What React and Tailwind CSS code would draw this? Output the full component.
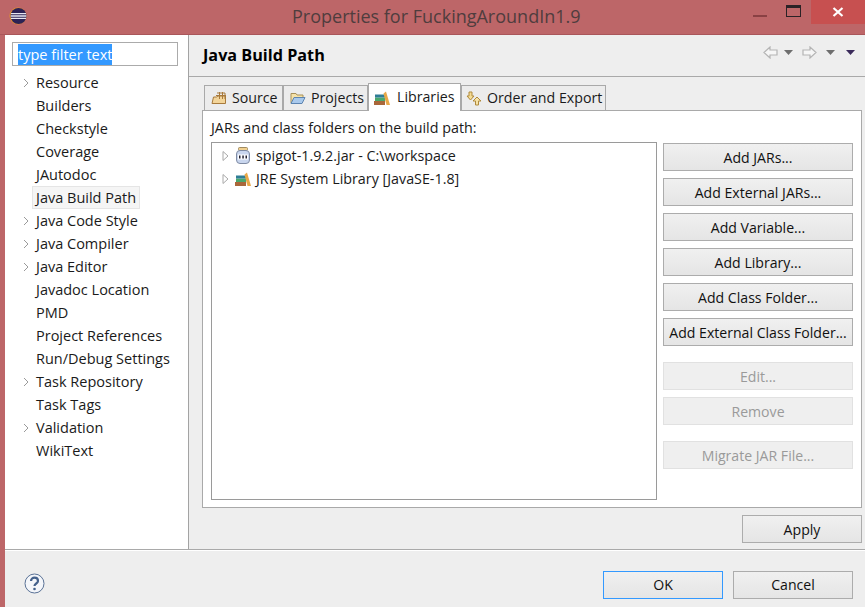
const font = { fontFamily: '"Open Sans", "Noto Sans", sans-serif' };

const treeItems = [
  ["Resource", true], ["Builders"], ["Checkstyle"], ["Coverage"], ["JAutodoc"],
  ["Java Build Path", false, true], ["Java Code Style", true], ["Java Compiler", true],
  ["Java Editor", true], ["Javadoc Location"], ["PMD"], ["Project References"],
  ["Run/Debug Settings"], ["Task Repository", true], ["Task Tags"], ["Validation", true], ["WikiText"],
];

function Chevron({ color = "#9a9a9a" }) {
  return (
    <svg width="6" height="10" viewBox="0 0 6 10" className="shrink-0">
      <path d="M1 1l4 4-4 4" fill="none" stroke={color} strokeWidth="1" />
    </svg>
  );
}

function Tri() {
  return (
    <svg width="7" height="10" viewBox="0 0 7 10" className="shrink-0">
      <path d="M1 .5l5 4.500-5 4.500z" fill="#fff" stroke="#a8a8a8" strokeWidth="1" />
    </svg>
  );
}

function Eclipse() {
  return (
    <svg width="18" height="18" viewBox="0 0 18 18">
      <circle cx="9" cy="9" r="8.500" fill="#e8942a" />
      <circle cx="9.500" cy="9" r="8" fill="#2c2255" />
      <path d="M2 6.600h15M1.700 9h15.600M2 11.400h15" stroke="#e6e6f0" strokeWidth="1.300" />
    </svg>
  );
}

function Books({ className = "" }) {
  return (
    <svg width="16" height="14" viewBox="0 0 16 14" className={className}>
      <rect x="0" y="10" width="11" height="4" fill="#a9673a" />
      <rect x="1" y="6.500" width="10" height="3.500" fill="#4aa86c" />
      <rect x="1" y="3.500" width="10" height="3" fill="#2f7d96" />
      <path d="M9.500 2.500L12 .5l4 13.500h-3.500z" fill="#e8a848" />
    </svg>
  );
}

function Jar() {
  return (
    <svg width="14" height="17" viewBox="0 0 14 17">
      <rect x="2.500" y="0.500" width="9" height="3" rx="1" fill="#f0d090" stroke="#a08a60" />
      <rect x="0.500" y="3.500" width="13" height="13" rx="3.500" fill="#c9d6ee" stroke="#7f8ba3" />
      <path d="M2 7.500h10v5H2z" fill="#fff" />
      <path d="M3 8.500h1.500v3H3zM6.300 8.500h1.500v3H6.300zM9.500 8.500H11v3H9.500z" fill="#223" />
    </svg>
  );
}

function SourceIcon() {
  return (
    <svg width="16" height="14" viewBox="0 0 16 14">
      <path d="M1 12.500L2.500 6h3l1.500-1h7.500v7.500z" fill="#f3d59a" stroke="#a87a3c" />
      <path d="M6 2h8v6M8.500 1v7M11.500 1v7M5 4.500h10" fill="none" stroke="#a87a3c" />
    </svg>
  );
}

function FolderIcon() {
  return (
    <svg width="16" height="14" viewBox="0 0 16 14">
      <path d="M1 12V2.500h5l1 1.500h6v3" fill="#f5e2a8" stroke="#a89058" />
      <path d="M1 12.500l3-6h11l-3 6z" fill="#a9c9ec" stroke="#5d84b0" />
    </svg>
  );
}

function OrderIcon() {
  return (
    <svg width="16" height="15" viewBox="0 0 16 15">
      <path d="M3 1h3v4h2l-3.500 4L1 5h2z" fill="#f4dc94" stroke="#b08a3c" />
      <path d="M12.500 14H9.500v-4H7l4-4 4 4h-2.500z" fill="#f6e3a8" stroke="#b08a3c" />
    </svg>
  );
}

function Arrow({ flip }) {
  return (
    <svg width="15" height="13" viewBox="0 0 15 13" className={flip ? "-scale-x-100" : ""}>
      <path d="M1 6.500L7 1v3h7v5H7v3z" fill="#f6f6f6" stroke="#b4b4b4" strokeWidth="1.200" />
    </svg>
  );
}

function Drop({ color = "#6e6e6e" }) {
  return (
    <svg width="9" height="5" viewBox="0 0 9 5">
      <path d="M0 0h9L4.500 5z" fill={color} />
    </svg>
  );
}

function Btn({ children, disabled, primary, flat, className = "" }) {
  const look = disabled
    ? "border-[#e1e1e1] bg-[#efefef] text-[#9a9a9a]"
    : primary
      ? "border-[#3399ff] bg-gradient-to-b from-[#f0f0f0] to-[#e5e5e5] text-[#111]"
      : "border-[#acacac] bg-gradient-to-b from-[#f0f0f0] to-[#e5e5e5] text-[#111]";
  return (
    <div className={`flex h-7 items-center justify-center border text-[14.100px] leading-none whitespace-nowrap ${flat ? "" : "pt-[2px]"} ${look} ${className}`}>
      {children}
    </div>
  );
}

function Tab({ icon, label, active, className = "" }) {
  return active ? (
    <div className={`z-10 -mb-px flex h-[28px] items-center gap-[7px] self-end border border-b-0 border-[#a9a9a9] bg-white text-[14.200px] whitespace-nowrap ${className}`}>
      {icon}
      <span className="-mt-[2px]">{label}</span>
    </div>
  ) : (
    <div className={`flex h-[25px] items-center gap-[5px] self-end border border-b-0 border-[#a9a9a9] bg-[#ececec] text-[14.200px] whitespace-nowrap ${className}`}>
      {icon}
      <span>{label}</span>
    </div>
  );
}

export default function App() {
  return (
    <div style={font} className="flex h-[607px] w-[865px] flex-col overflow-hidden bg-[#bd6668] text-[#1a1a1a]">
      {/* Title bar */}
      <div className="flex h-[35px] shrink-0 border-b border-[#a9565a]">
        <div className="flex w-[292px] items-start pl-[9px] pt-[7px]">
          <Eclipse />
        </div>
        <div className="w-[301px] pt-[5px] text-[18px] leading-[23px] whitespace-nowrap text-[#4f3d3e]">
          Properties for FuckingAroundIn1.9
        </div>
        <div className="flex flex-1 items-start">
          <div className="ml-[160px] mt-[15px] h-[2px] w-[14px] bg-[#8a4144]" />
          <div className="ml-[19px] mt-[5px] h-[12px] w-[15px] border border-t-[3px] border-[#2b2226]" />
          <div className="ml-[10px] flex h-6 w-[54px] items-center justify-center bg-[#c75050]">
            <svg width="12" height="10" viewBox="0 0 12 10">
              <path d="M1.500 1l9 8M10.500 1l-9 8" stroke="#fff" strokeWidth="2.200" />
            </svg>
          </div>
        </div>
      </div>

      {/* Body */}
      <div className="ml-[5px] flex min-h-0 flex-1 flex-col bg-[#eeeeee]">
        <div className="flex h-[515px] border-b border-[#a9a9a9]">
          {/* Left nav */}
          <div className="w-[184px] shrink-0 border-r border-[#a3a3a3] bg-white pt-[7px]">
            <div className="mx-[7px] flex h-[24px] w-[166px] items-center border border-[#ababab] px-[5px]">
              <span className="bg-[#3399ff] pt-px text-[14.500px] leading-[20px] whitespace-nowrap text-white">type filter text</span>
            </div>
            <div className="mt-[5px] flex flex-col">
              {treeItems.map(([name, chev, sel]) => (
                <div key={name} className="flex h-[23px] items-center">
                  <span className="flex w-[27px] shrink-0 justify-end pr-[3px]">{chev ? <Chevron /> : null}</span>
                  <span className={`flex h-[23px] items-center border px-[3px] text-[14.500px] whitespace-nowrap ${sel ? "border-[#e5e5e5] bg-[#f5f5f5]" : "border-transparent"}`}>{name}</span>
                </div>
              ))}
            </div>
          </div>

          {/* Right page */}
          <div className="flex min-w-0 flex-1 flex-col">
            <div className="flex h-[42px] shrink-0 items-center justify-between border-b border-[#a9a9a9] pl-[14px] pr-[10px]">
              <span className="text-[16.200px] font-bold text-black">Java Build Path</span>
              <div className="-mt-[6px] flex items-center">
                <Arrow />
                <span className="ml-[6px]"><Drop /></span>
                <span className="ml-[9px]"><Arrow flip /></span>
                <span className="ml-[9px]"><Drop /></span>
                <span className="ml-[11px]"><Drop color="#3a2a5a" /></span>
              </div>
            </div>

            <div className="flex h-[33px] shrink-0 items-end pl-[15px] pr-[2px]">
              <Tab icon={<SourceIcon />} label="Source" className="w-[79px] pl-[6px]" />
              <Tab icon={<FolderIcon />} label="Projects" className="w-[85px] pl-[6px]" />
              <Tab icon={<Books />} label="Libraries" active className="w-[93px] pl-[5px]" />
              <Tab icon={<OrderIcon />} label="Order and Export" className="w-[145px] pl-[4px]" />
            </div>

            <div className="ml-[13px] mr-[3px] flex h-[398px] shrink-0 flex-col border border-[#a9a9a9] bg-white px-[8px]">
              <div className="flex h-[31px] shrink-0 items-center pt-[3px] text-[14.300px]">JARs and class folders on the build path:</div>
              <div className="flex min-h-0 flex-1 gap-[6px] pb-[7px]">
                <div className="w-[446px] border border-[#9a9a9a] pt-[1px]">
                  <div className="flex h-[23px] items-center">
                    <span className="ml-[10px] w-[13px]"><Tri /></span>
                    <span className="flex w-[15px] justify-center"><Jar /></span>
                    <span className="ml-[6px] text-[14.300px] whitespace-nowrap">spigot-1.9.2.jar - C:\workspace</span>
                  </div>
                  <div className="flex h-[23px] items-center">
                    <span className="ml-[10px] w-[13px]"><Tri /></span>
                    <Books />
                    <span className="ml-[5px] text-[14.300px] whitespace-nowrap">JRE System Library [JavaSE-1.8]</span>
                  </div>
                </div>
                <div className="flex w-[190px] shrink-0 flex-col pt-[1px]">
                  <div className="flex flex-col gap-[7px]">
                    <Btn>Add JARs...</Btn>
                    <Btn>Add External JARs...</Btn>
                    <Btn>Add Variable...</Btn>
                    <Btn>Add Library...</Btn>
                    <Btn>Add Class Folder...</Btn>
                    <Btn>Add External Class Folder...</Btn>
                  </div>
                  <Btn disabled className="mt-[16px]">Edit...</Btn>
                  <Btn disabled className="mt-[7px]">Remove</Btn>
                  <Btn disabled className="mt-[16px]">Migrate JAR File...</Btn>
                </div>
              </div>
            </div>

            <div className="flex flex-1 items-start justify-end pr-[3px] pt-[7px]">
              <Btn className="w-[120px]">Apply</Btn>
            </div>
          </div>
        </div>

        {/* Footer */}
        <div className="flex flex-1 items-start border-t border-white pl-[19px] pt-[23px]">
          <svg width="21" height="21" viewBox="0 0 21 21" className="-mt-[1px] shrink-0">
            <circle cx="10.500" cy="10.500" r="9.500" fill="#f4f6fa" stroke="#5a7296" strokeWidth="1" />
            <path d="M7 8c0-4.500 7-4.500 7 0 0 2.500-3.500 2.500-3.500 5" fill="none" stroke="#44618c" strokeWidth="2.200" />
            <circle cx="10.500" cy="16" r="1.300" fill="#44618c" />
          </svg>
          <div className="ml-auto flex gap-[10px] pr-[12px] -mt-[3px]">
            <Btn primary flat className="w-[120px]">OK</Btn>
            <Btn flat className="w-[120px]">Cancel</Btn>
          </div>
        </div>
      </div>
    </div>
  );
}
